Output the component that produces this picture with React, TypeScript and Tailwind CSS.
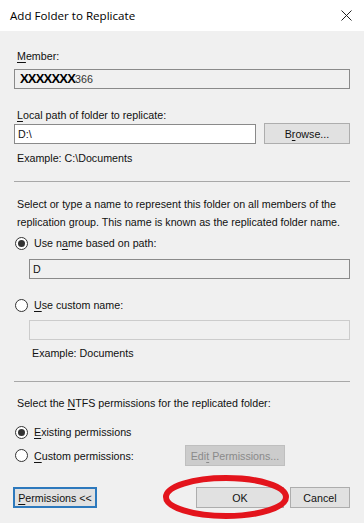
import React from "react";

function U({ children }: { children: React.ReactNode }) {
  return <span className="underline underline-offset-2">{children}</span>;
}

function Radio({ checked }: { checked?: boolean }) {
  return (
    <span className="w-[13px] h-[13px] rounded-full border border-[#333] bg-white flex items-center justify-center shrink-0">
      {checked && <span className="w-[7px] h-[7px] rounded-full bg-[#333]" />}
    </span>
  );
}

function Button({
  children,
  className = "",
}: {
  children: React.ReactNode;
  className?: string;
}) {
  return (
    <div
      className={
        "h-[21px] flex items-center justify-center border border-[#adadad] bg-[#e1e1e1] text-[#111] " +
        className
      }
    >
      {children}
    </div>
  );
}

export default function App() {
  return (
    <div
      className="relative w-[364px] h-[523px] bg-[#f0f0f0] overflow-hidden text-[10.7px] leading-[14px] text-[#111]"
      style={{ fontFamily: '"Liberation Sans", Arial, sans-serif' }}
    >
      {/* title bar */}
      <div className="h-[31px] bg-white flex items-center justify-between pl-[10px] pr-[12px]">
        <span
          className="text-[11.6px] text-black"
          style={{ fontFamily: '"Open Sans", "Liberation Sans", sans-serif' }}
        >
          Add Folder to Replicate
        </span>
        <svg width="11" height="11" viewBox="0 0 11 11" className="text-[#222]">
          <path d="M0.5 0.5 L10.5 10.5 M10.5 0.5 L0.5 10.5" stroke="currentColor" strokeWidth="1" />
        </svg>
      </div>

      <div className="px-[14px] flex flex-col">
        <div className="mt-[18px] pl-[3px]">
          <U>M</U>ember:
        </div>
        <div className="mt-[6px] h-[20px] border border-[#8a8a8a] bg-[#f0f0f0] flex items-center pl-[5px]">
          <span className="font-bold text-[13px] tracking-[-0.8px] text-black">XXXXXXX</span>
          <span className="text-[#333]">366</span>
        </div>

        <div className="mt-[19px] pl-[3px]">
          <U>L</U>ocal path of folder to replicate:
        </div>
        <div className="mt-[1px] flex items-center gap-[8px] h-[21px]">
          <div className="w-[242px] h-[20px] border border-[#8a8a8a] bg-white flex items-center pl-[3px]">
            D:\
          </div>
          <Button className="flex-1">
            B<U>r</U>owse...
          </Button>
        </div>
        <div className="mt-[7px] pl-[3px]">Example: C:\Documents</div>

        <div className="mt-[16px] border-t border-[#a8a8a8]" />

        <div className="mt-[13px] pl-[3px] leading-[18px]">
          Select or type a name to represent this folder on all members of the
          replication group. This name is known as the replicated folder name.
        </div>

        <div className="mt-[4px] h-[16px] flex items-center gap-[6px] pl-[1px]">
          <Radio checked />
          <span>
            Use n<U>a</U>me based on path:
          </span>
        </div>
        <div className="mt-[8px] ml-[15px] h-[20px] border border-[#8a8a8a] bg-[#f0f0f0] flex items-center pl-[3px]">
          D
        </div>

        <div className="mt-[18px] h-[16px] flex items-center gap-[6px] pl-[1px]">
          <Radio />
          <span>
            <U>U</U>se custom name:
          </span>
        </div>
        <div className="mt-[7px] ml-[15px] h-[20px] border border-[#cccccc] bg-[#f0f0f0]" />
        <div className="mt-[6px] pl-[18px]">Example: Documents</div>

        <div className="mt-[21px] border-t border-[#a8a8a8]" />

        <div className="mt-[14px] pl-[3px]">
          Select the <U>N</U>TFS permissions for the replicated folder:
        </div>

        <div className="mt-[14px] h-[16px] flex items-center gap-[6px] pl-[1px]">
          <Radio checked />
          <span>
            <U>E</U>xisting permissions
          </span>
        </div>
        <div className="mt-[5px] h-[21px] flex items-center pl-[1px]">
          <div className="flex items-center gap-[6px] w-[170px]">
            <Radio />
            <span>
              <U>C</U>ustom permissions:
            </span>
          </div>
          <div className="w-[100px] h-[21px] border border-[#bfbfbf] bg-[#cccccc] text-[#8a8a8a] flex items-center justify-center">
            Edi<U>t</U>&nbsp;Permissions...
          </div>
        </div>

        <div className="mt-[21px] flex items-center h-[21px]">
          <div className="w-[84px] h-[21px] border-2 border-[#2d79bd] bg-[#e1e1e1] flex items-center justify-center ml-[-1px]">
            <U>P</U>ermissions &lt;&lt;
          </div>
          <div className="flex-1" />
          <Button className="w-[88px]">OK</Button>
          <Button className="w-[60px] ml-[6px]">Cancel</Button>
        </div>
      </div>

      {/* red annotation ellipse */}
      <svg
        className="absolute left-[162px] top-[473px] pointer-events-none"
        width="130"
        height="50"
        viewBox="0 0 130 50"
      >
        <ellipse cx="64" cy="24" rx="60" ry="19" fill="none" stroke="#e3141c" strokeWidth="6" />
      </svg>
    </div>
  );
}
